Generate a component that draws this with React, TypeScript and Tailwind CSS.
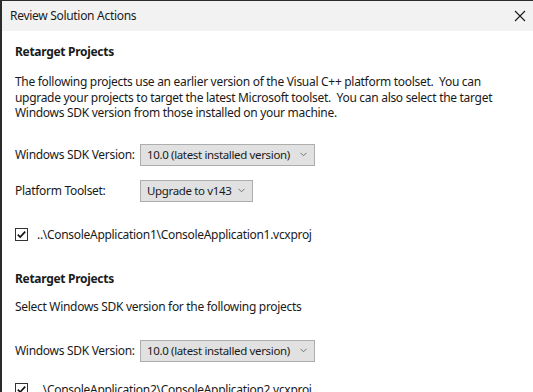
import React from 'react'

const font = { fontFamily: '"Noto Sans", "Open Sans", sans-serif' }

function Dropdown({ value, width }: { value: string; width: string }) {
  return (
    <div
      className={`flex shrink-0 items-center justify-between h-[22px] ${width} bg-[#e1e1e1] border border-[#adadad] pl-[6px] pr-[7px] text-[11.5px] text-[#1a1a1a] whitespace-nowrap tracking-[-0.35px]`}
    >
      <span>{value}</span>
      <svg width="7" height="5" viewBox="0 0 7 5" className="ml-[4px] shrink-0">
        <path d="M0.5 0.8 L3.5 3.8 L6.5 0.8" fill="none" stroke="#707070" strokeWidth="1" />
      </svg>
    </div>
  )
}

function Row({ label, value, width, className }: { label: string; value: string; width: string; className: string }) {
  return (
    <div className={`flex items-center ${className}`}>
      <span className="w-[125px] shrink-0 whitespace-nowrap text-[12px] text-[#1a1a1a]">{label}</span>
      <Dropdown value={value} width={width} />
    </div>
  )
}

function Checkbox({ label, className }: { label: string; className: string }) {
  return (
    <div className={`flex items-center h-[16px] ${className}`}>
      <div className="w-[13px] h-[13px] shrink-0 border border-[#333333] bg-white flex items-center justify-center">
        <svg width="11" height="11" viewBox="0 0 11 11">
          <path d="M1.8 5.6 L4.2 8 L9.2 2.6" fill="none" stroke="#111" strokeWidth="1.6" />
        </svg>
      </div>
      <span className="ml-[9px] whitespace-nowrap text-[12px] text-[#1a1a1a]">{label}</span>
    </div>
  )
}

export default function App() {
  return (
    <div
      className="w-[533px] h-[392px] overflow-hidden bg-white border-l-2 border-t border-[#2b2b2b] tracking-[-0.3px]"
      style={font}
    >
      <div className="h-[30px] bg-[#f2f2f2] flex items-center justify-between pl-[8px] pr-[6px]">
        <span className="text-[12px] text-[#1a1a1a]">Review Solution Actions</span>
        <svg width="12" height="12" viewBox="0 0 12 12" className="mr-[1px]">
          <path d="M1 1 L11 11 M11 1 L1 11" stroke="#1a1a1a" strokeWidth="1.1" />
        </svg>
      </div>
      <div className="px-[13px] flex flex-col">
        <div className="mt-[13px] h-[16px] leading-[16px] text-[12px] font-bold text-[#1a1a1a]">Retarget Projects</div>
        <p className="mt-[14px] whitespace-nowrap text-[12px] leading-[15.5px] text-[#1a1a1a]">
          The following projects use an earlier version of the Visual C++ platform toolset.&nbsp; You can
          <br />
          upgrade your projects to target the latest Microsoft toolset.&nbsp; You can also select the target
          <br />
          Windows SDK version from those installed on your machine.
        </p>
        <Row className="mt-[23px]" label="Windows SDK Version:" value="10.0 (latest installed version)" width="w-[175px]" />
        <Row className="mt-[14px]" label="Platform Toolset:" value="Upgrade to v143" width="w-[113px]" />
        <Checkbox className="mt-[25px]" label="..\ConsoleApplication1\ConsoleApplication1.vcxproj" />
        <div className="mt-[28px] h-[16px] leading-[16px] text-[12px] font-bold text-[#1a1a1a]">Retarget Projects</div>
        <div className="mt-[12px] h-[16px] leading-[16px] whitespace-nowrap text-[12px] text-[#1a1a1a]">
          Select Windows SDK version for the following projects
        </div>
        <Row className="mt-[25px]" label="Windows SDK Version:" value="10.0 (latest installed version)" width="w-[175px]" />
        <Checkbox className="mt-[20px]" label="..\ConsoleApplication2\ConsoleApplication2.vcxproj" />
      </div>
    </div>
  )
}
